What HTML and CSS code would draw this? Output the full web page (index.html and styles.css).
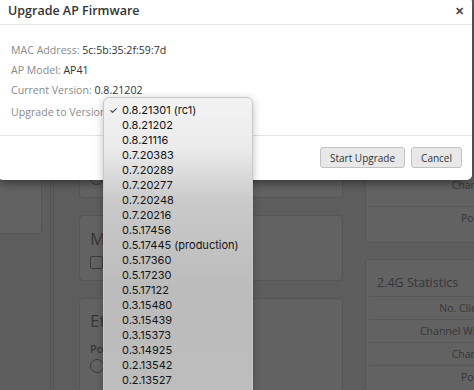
FILE: index.html
```html
<!DOCTYPE html>
<html lang="en">
<head>
  <meta charset="UTF-8">
  <meta name="viewport" content="width=device-width, initial-scale=1.0">
  <title>Access Point - Upgrade Firmware</title>
  <link rel="stylesheet" href="styles.css">
</head>
<body>
  <!-- page behind the dialog (dimmed) -->
  <div class="page">
    <div class="col-left">
      <div class="panel side-panel"></div>
      <div class="rail"></div>
    </div>

    <div class="col-mid">
      <div class="panel panel-a">
        <span class="check round"></span>
      </div>
      <div class="panel panel-b">
        <h3>Mesh</h3>
        <span class="check"></span>
      </div>
      <div class="panel panel-c">
        <h3>Ethernet</h3>
        <label>Port</label>
        <span class="check round"></span>
      </div>
    </div>

    <div class="col-right">
      <div class="panel panel-d">
        <div class="row">Channel</div>
        <div class="row">Power</div>
      </div>
      <div class="panel panel-e">
        <h3>2.4G Statistics</h3>
        <div class="row">No. Clients</div>
        <div class="row">Channel Width</div>
        <div class="row">Channel</div>
        <div class="row">Power</div>
      </div>
    </div>
  </div>

  <!-- Upgrade dialog -->
  <div class="modal">
    <div class="modal-header">
      <h4>Upgrade AP Firmware</h4>
      <span class="close">&#x2715;</span>
    </div>
    <div class="modal-body">
      <p><span class="lbl">MAC Address:</span> 5c:5b:35:2f:59:7d</p>
      <p><span class="lbl">AP Model:</span> AP41</p>
      <p><span class="lbl">Current Version:</span> 0.8.21202</p>
      <p class="select-row"><span class="lbl">Upgrade to Version:</span></p>
    </div>
    <div class="modal-footer">
      <button class="btn">Start Upgrade</button>
      <button class="btn">Cancel</button>
    </div>
  </div>

  <!-- open version menu -->
  <ul class="menu">
    <li class="checked">0.8.21301 (rc1)</li>
    <li>0.8.21202</li>
    <li>0.8.21116</li>
    <li>0.7.20383</li>
    <li>0.7.20289</li>
    <li>0.7.20277</li>
    <li>0.7.20248</li>
    <li>0.7.20216</li>
    <li>0.5.17456</li>
    <li>0.5.17445 (production)</li>
    <li>0.5.17360</li>
    <li>0.5.17230</li>
    <li>0.5.17122</li>
    <li>0.3.15480</li>
    <li>0.3.15439</li>
    <li>0.3.15373</li>
    <li>0.3.14925</li>
    <li>0.2.13542</li>
    <li>0.2.13527</li>
  </ul>
</body>
</html>
```

FILE: styles.css
```css
body {
  margin: 0;
  height: 390px;
  overflow: hidden;
  background: #5d5d5d;
  font-family: 'Open Sans', sans-serif;
  color: #363636;
}

/* dimmed page */
.page {
  display: flex;
}

.panel {
  background: #626262;
  border: 1px solid #555;
  border-radius: 4px;
  box-sizing: border-box;
}

.col-left {
  display: flex;
  width: 79px;
  flex-shrink: 0;
}

.side-panel {
  width: 46px;
  height: 234px;
  margin-left: -4px;
  border-top: none;
  border-radius: 0 0 4px 0;
}

.rail {
  width: 2px;
  height: 390px;
  margin-left: 8px;
  border-left: 1px solid #545454;
  border-right: 1px solid #545454;
}

.col-mid {
  width: 264px;
  flex-shrink: 0;
  display: flex;
  flex-direction: column;
  gap: 17px;
}

.col-mid .panel {
  padding: 0 10px;
}

.col-mid h3 {
  margin: 0;
  font-size: 17px;
  font-weight: 400;
}

.col-mid label {
  display: block;
  font-size: 11px;
  font-weight: 600;
  margin-top: 9px;
}

.check {
  display: block;
  width: 11px;
  height: 11px;
  border: 1px solid #3c3c3c;
  border-radius: 2px;
}

.check.round {
  border-radius: 50%;
}

.panel-a {
  height: 198px;
  border-top: none;
  border-radius: 0 0 4px 4px;
  display: flex;
  flex-direction: column;
  justify-content: flex-end;
  padding-bottom: 12px !important;
}

.panel-b {
  height: 66px;
  padding-top: 11px !important;
}

.panel-b .check {
  margin-top: 6px;
}

.panel-c {
  height: 120px;
  padding-top: 10px !important;
}

.panel-c .check {
  margin-top: 3px;
  width: 12px;
  height: 12px;
}

.col-right {
  margin-left: 22px;
  width: 170px;
  flex-shrink: 0;
  display: flex;
  flex-direction: column;
  gap: 16px;
}

.col-right .panel {
  padding: 0 8px 0 3px;
}

.row {
  text-align: right;
  font-size: 10.5px;
  padding-right: 34px;
  border-top: 1px solid #585858;
  height: 22px;
  line-height: 22px;
  white-space: nowrap;
}

.panel-d {
  height: 243px;
  border-top: none;
  display: flex;
  flex-direction: column;
  justify-content: flex-end;
  padding-bottom: 13px !important;
}

.panel-d .row {
  margin-top: 10px;
}

.panel-d .row:first-child {
  border-top: none;
}

.panel-e {
  height: 150px;
}

.panel-e h3 {
  margin: 0;
  padding: 14px 0 5px 8px;
  font-size: 12.5px;
  line-height: 17px;
  font-weight: 400;
}

/* dialog */
.modal {
  position: absolute;
  top: -3px;
  left: -2px;
  width: 474px;
  height: 183px;
  background: #fff;
  border-radius: 5px;
  box-shadow: 0 3px 8px rgba(0, 0, 0, 0.45);
  color: #333;
}

.modal-header {
  display: flex;
  justify-content: space-between;
  align-items: center;
  height: 27px;
  padding: 0 8px 0 10px;
  border-bottom: 1px solid #e3e3e3;
}

.modal-header h4 {
  margin: 0;
  font-size: 12.5px;
  font-weight: 600;
  color: #333;
}

.close {
  font-size: 11px;
  font-weight: 700;
  color: #444;
}

.modal-body {
  height: 111px;
  box-sizing: border-box;
  padding: 15px 13px 0;
  border-bottom: 1px solid #e3e3e3;
}

.modal-body p {
  margin: 0;
  font-size: 10.6px;
  line-height: 20px;
}

.modal-body .select-row {
  margin-top: 2px;
}

.lbl {
  color: #8a8a8a;
}

.modal-footer {
  display: flex;
  justify-content: flex-end;
  gap: 6px;
  padding: 11px 10px 0;
}

.btn {
  height: 21px;
  padding: 0 9px;
  font-family: 'Open Sans', sans-serif;
  font-size: 10px;
  color: #333;
  background: #e8e8e8;
  border: 1px solid #c2c2c2;
  border-radius: 3px;
}

/* native select menu */
.menu {
  position: absolute;
  top: 97px;
  left: 103px;
  width: 150px;
  height: 310px;
  margin: 0;
  padding: 5px 0 0;
  list-style: none;
  box-sizing: border-box;
  border: 1px solid #c8c8c8;
  border-radius: 6px;
  background: linear-gradient(#f3f3f3 0, #ebebeb 50px, #c9c9c9 105px, #bcbcbc 190px, #bdbdbd 100%);
  box-shadow: 0 2px 8px rgba(0, 0, 0, 0.25);
  font-family: Inter, 'Noto Sans', sans-serif;
  font-size: 11px;
  color: #141414;
}

.menu li {
  height: 15px;
  line-height: 15px;
  padding-left: 18px;
  white-space: nowrap;
  position: relative;
}

.menu li.checked::before {
  content: '\2713';
  position: absolute;
  left: 5px;
  font-size: 10px;
}
```
